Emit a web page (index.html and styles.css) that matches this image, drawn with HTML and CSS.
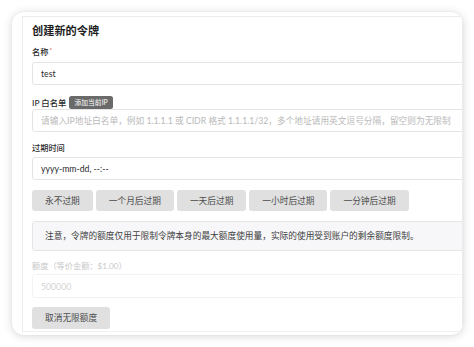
FILE: index.html
```html
<!DOCTYPE html>
<html lang="zh-CN">
<head>
<meta charset="utf-8">
<link rel="stylesheet" href="styles.css">
</head>
<body>
<div class="page">
  <div class="card">
    <div class="panel">
      <div class="title">创建新的令牌</div>

      <div class="label first">名称<span class="req">*</span></div>
      <div class="input"><span class="val">test</span></div>

      <div class="label-row">
        <span class="label-inline">IP 白名单</span>
        <span class="tag">添加当前IP</span>
      </div>
      <div class="input tight"><span class="ph">请输入IP地址白名单，例如 1.1.1.1 或 CIDR 格式 1.1.1.1/32，多个地址请用英文逗号分隔，留空则为无限制</span></div>

      <div class="label">过期时间</div>
      <div class="input"><span class="val">yyyy-mm-dd, --:--</span></div>

      <div class="btn-row">
        <span class="btn">永不过期</span>
        <span class="btn">一个月后过期</span>
        <span class="btn">一天后过期</span>
        <span class="btn">一小时后过期</span>
        <span class="btn">一分钟后过期</span>
      </div>

      <div class="notice">注意，令牌的额度仅用于限制令牌本身的最大额度使用量，实际的使用受到账户的剩余额度限制。</div>

      <div class="label disabled">额度（等价金额：$1.00）</div>
      <div class="input off"><span class="ph-off">500000</span></div>

      <div class="btn-row last">
        <span class="btn">取消无限额度</span>
      </div>
    </div>
  </div>
</div>
</body>
</html>
```

FILE: styles.css
```css
* { box-sizing: border-box; }
html, body { margin: 0; padding: 0; background: #ffffff; }
body {
  font-family: Lato, "Noto Sans CJK SC", sans-serif;
  color: #333;
}
.page {
  padding: 12px 11px 12px 12px;
}
.card {
  width: 451px;
  height: 323px;
  background: #fff;
  border-radius: 12px;
  box-shadow: 0 1px 10px rgba(0, 0, 0, 0.16), 0 0 2px rgba(0, 0, 0, 0.06);
  padding: 4px 0 3px 10px;
  overflow: hidden;
}
.panel {
  height: 100%;
  border: 1px solid #ececec;
  border-bottom: 1px solid #f2f2f2;
  padding: 6px 0 0 9px;
  overflow: hidden;
}
.title {
  font-size: 11.2px;
  line-height: 16px;
  font-weight: 600;
  color: #1e1e1e;
}
.label {
  font-size: 8.2px;
  line-height: 12px;
  font-weight: 500;
  color: #2c2c2c;
  margin: 10px 0 3px;
}
.label.first { margin-top: 5px; margin-bottom: 4px; }
.req {
  color: #e5484d;
  font-size: 6px;
  vertical-align: 3px;
  margin-left: 1px;
}
.label.disabled {
  color: #c9c9c9;
  font-weight: 400;
  margin: 9px 0 2px;
}
.label-row {
  display: flex;
  align-items: center;
  height: 14px;
  margin-top: 10px;
}
.label-inline {
  font-size: 8.4px;
  font-weight: 500;
  color: #2c2c2c;
}
.tag {
  margin-left: 3px;
  background: #6a6a6a;
  color: #fff;
  font-size: 6.8px;
  line-height: 13px;
  height: 13px;
  padding: 0 5px;
  border-radius: 2.5px;
}
.input {
  width: 460px;
  height: 23px;
  border: 1px solid #e4e4e4;
  border-radius: 3px;
  display: flex;
  align-items: center;
  padding-left: 8px;
  font-size: 8.7px;
  white-space: nowrap;
}
.val { color: #2a2a2a; }
.ph { color: #b9b9b9; }
.input.off {
  height: 24px;
  border-color: #f3f3f3;
}
.ph-off { color: #d3d3d3; }
.btn-row {
  display: flex;
  gap: 3px;
  margin-top: 10px;
}
.btn-row.last { margin-top: 9px; }
.btn {
  background: #e0e0e0;
  color: #4c4c4c;
  font-size: 8.7px;
  height: 21px;
  line-height: 21px;
  padding: 0 13px;
  border-radius: 3px;
  white-space: nowrap;
}
.btn-row.last .btn { height: 22px; line-height: 22px; }
.notice {
  width: 460px;
  margin-top: 10px;
  height: 30px;
  background: #f7f7f9;
  border: 1px solid #e6e6e8;
  border-radius: 3px;
  font-size: 8.7px;
  line-height: 28px;
  padding-left: 12px;
  color: #404040;
  white-space: nowrap;
}
```
